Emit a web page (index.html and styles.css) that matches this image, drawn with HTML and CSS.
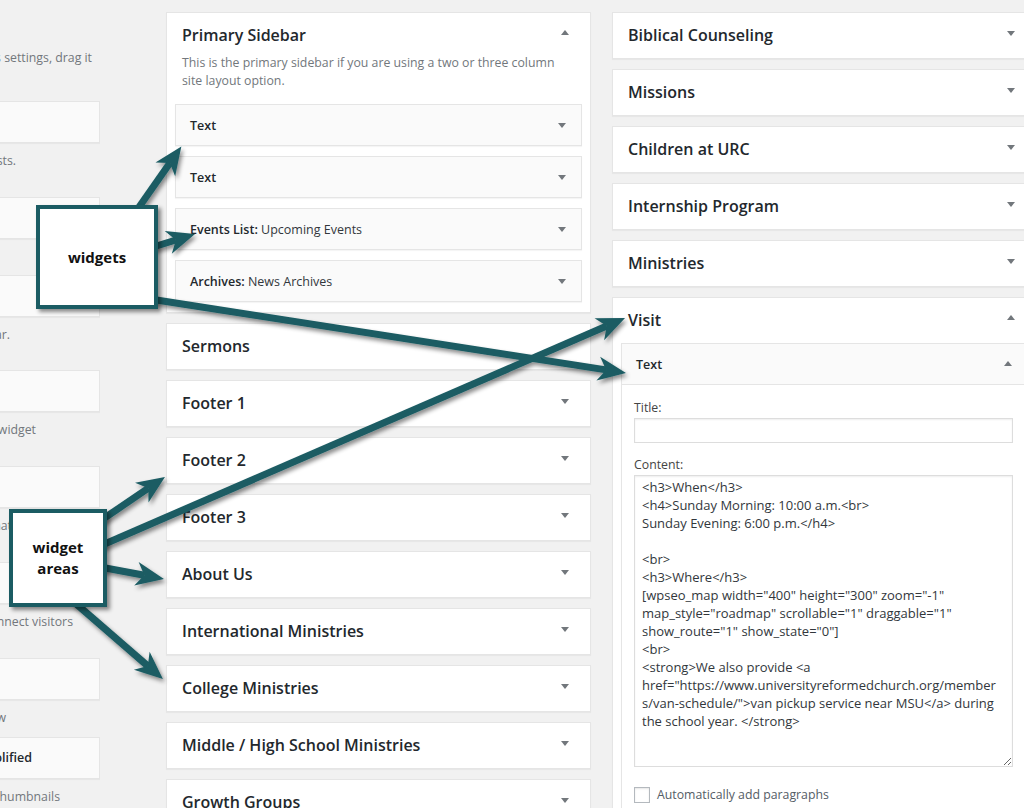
FILE: index.html
```html
<!DOCTYPE html>
<html lang="en">
<head>
    <meta charset="UTF-8">
    <meta name="viewport" content="width=device-width, initial-scale=1.0">
    <title>Widgets</title>
    <link rel="stylesheet" href="styles.css">
</head>
<body>
<div class="screen">

    <!-- available widgets (cut off on the left) -->
    <div class="available">
        <p class="cut end-92"><span>To activate a widget drag it to a sidebar or click on it. To deactivate a widget and delete its settings, drag it</span></p>

        <div class="avail-widget gap-first">
            <div class="avail-top"></div>
            <p class="avail-desc cut end-16"><span>Your site&rsquo;s most recent Posts.</span></p>
        </div>
        <div class="avail-widget">
            <div class="avail-top"></div>
        </div>
        <div class="avail-widget gap-lg">
            <div class="avail-top"></div>
            <p class="avail-desc cut end-10"><span>Add a custom menu to your sidebar.</span></p>
        </div>
        <div class="avail-widget gap-md">
            <div class="avail-top"></div>
            <p class="avail-desc cut end-36"><span>Arbitrary text or HTML in a widget</span></p>
        </div>
        <div class="avail-widget">
            <div class="avail-top"></div>
            <p class="avail-desc cut end-12"><span>Displays your events in a list or compact format</span></p>
        </div>
        <div class="avail-widget">
            <div class="avail-top"></div>
            <p class="avail-desc cut end-73"><span>Social icons that help you connect visitors</span></p>
        </div>
        <div class="avail-widget">
            <div class="avail-top"></div>
            <p class="avail-desc cut end-6"><span>Shows recent posts as a slideshow</span></p>
        </div>
        <div class="avail-widget gap-sm">
            <div class="avail-top"><h3 class="cut end-title"><span>Recent Posts Simplified</span></h3></div>
            <p class="avail-desc cut end-60"><span>Recent posts with excerpts and thumbnails</span></p>
        </div>
    </div>

    <!-- sidebars, first column -->
    <div class="sidebars col-mid">
        <div class="sidebar open">
            <div class="sidebar-name">
                <h2>Primary Sidebar</h2>
                <span class="toggle up"></span>
            </div>
            <p class="sidebar-description">This is the primary sidebar if you are using a two or three column site layout option.</p>
            <div class="widget">
                <div class="widget-top"><h3>Text</h3><span class="toggle"></span></div>
            </div>
            <div class="widget">
                <div class="widget-top"><h3>Text</h3><span class="toggle"></span></div>
            </div>
            <div class="widget">
                <div class="widget-top"><h3>Events List:<span class="in-title"> Upcoming Events</span></h3><span class="toggle"></span></div>
            </div>
            <div class="widget">
                <div class="widget-top"><h3>Archives:<span class="in-title"> News Archives</span></h3><span class="toggle"></span></div>
            </div>
        </div>
        <div class="sidebar"><div class="sidebar-name"><h2>Sermons</h2></div></div>
        <div class="sidebar"><div class="sidebar-name"><h2>Footer 1</h2><span class="toggle"></span></div></div>
        <div class="sidebar"><div class="sidebar-name"><h2>Footer 2</h2><span class="toggle"></span></div></div>
        <div class="sidebar"><div class="sidebar-name"><h2>Footer 3</h2><span class="toggle"></span></div></div>
        <div class="sidebar"><div class="sidebar-name"><h2>About Us</h2><span class="toggle"></span></div></div>
        <div class="sidebar"><div class="sidebar-name"><h2>International Ministries</h2><span class="toggle"></span></div></div>
        <div class="sidebar"><div class="sidebar-name"><h2>College Ministries</h2><span class="toggle"></span></div></div>
        <div class="sidebar"><div class="sidebar-name"><h2>Middle / High School Ministries</h2><span class="toggle"></span></div></div>
        <div class="sidebar"><div class="sidebar-name"><h2>Growth Groups</h2><span class="toggle"></span></div></div>
    </div>

    <!-- sidebars, second column -->
    <div class="sidebars col-right">
        <div class="sidebar"><div class="sidebar-name"><h2>Biblical Counseling</h2><span class="toggle"></span></div></div>
        <div class="sidebar"><div class="sidebar-name"><h2>Missions</h2><span class="toggle"></span></div></div>
        <div class="sidebar"><div class="sidebar-name"><h2>Children at URC</h2><span class="toggle"></span></div></div>
        <div class="sidebar"><div class="sidebar-name"><h2>Internship Program</h2><span class="toggle"></span></div></div>
        <div class="sidebar"><div class="sidebar-name"><h2>Ministries</h2><span class="toggle"></span></div></div>
        <div class="sidebar">
            <div class="sidebar-name"><h2>Visit</h2><span class="toggle up"></span></div>
            <div class="widget open">
                <div class="widget-top"><h3>Text</h3><span class="toggle up"></span></div>
                <div class="widget-inside">
                    <p>
                        <label for="title">Title:</label>
                        <input class="widefat" id="title" type="text" value="">
                    </p>
                    <p>
                        <label for="content">Content:</label>
                        <textarea class="widefat" id="content"><h3>When</h3>
<h4>Sunday Morning: 10:00 a.m.<br>
Sunday Evening: 6:00 p.m.</h4>

<br>
<h3>Where</h3>
[wpseo_map width="400" height="300" zoom="-1" map_style="roadmap" scrollable="1" draggable="1" show_route="1" show_state="0"]
<br>
<strong>We also provide <a href="https://www.universityreformedchurch.org/members/van-schedule/">van pickup service near MSU</a> during the school year. </strong></textarea>
                    </p>
                    <div class="check-row">
                        <input type="checkbox" id="filter">
                        <label for="filter">Automatically add paragraphs</label>
                    </div>
                </div>
            </div>
        </div>
    </div>

    <!-- annotations -->
    <svg class="callouts" width="1024" height="808" viewBox="0 0 1024 808">
        <defs>
            <marker id="head" markerUnits="userSpaceOnUse" viewBox="-10 -14 34 28" markerWidth="34" markerHeight="28" refX="0" refY="0" orient="auto">
                <path d="M20,0 L-8,-12 L0,0 L-8,12 Z" fill="#1b5c63"/>
            </marker>
            <filter id="shadow" x="-10%" y="-10%" width="130%" height="130%">
                <feDropShadow dx="2" dy="3" stdDeviation="2" flood-color="#000" flood-opacity="0.45"/>
            </filter>
        </defs>
        <g filter="url(#shadow)" stroke="#1b5c63" stroke-width="7" fill="none">
            <line x1="137" y1="210" x2="169.9" y2="162.9" marker-end="url(#head)"/>
            <line x1="150" y1="248" x2="175.9" y2="240" marker-end="url(#head)"/>
            <line x1="150" y1="299" x2="606.2" y2="369.9" marker-end="url(#head)"/>
            <line x1="100" y1="521" x2="148.4" y2="488.2" marker-end="url(#head)"/>
            <line x1="100" y1="546" x2="606.7" y2="326" marker-end="url(#head)"/>
            <line x1="100" y1="567" x2="144.3" y2="575.3" marker-end="url(#head)"/>
            <line x1="74" y1="602" x2="147.8" y2="666" marker-end="url(#head)"/>
        </g>
    </svg>
    <div class="callout callout-widgets">widgets</div>
    <div class="callout callout-areas">widget<br>areas</div>
</div>
</body>
</html>
```

FILE: styles.css
```css
* {
    box-sizing: border-box;
}
body {
    margin: 0;
    background: #f1f1f1;
    font-family: "Open Sans", "Liberation Sans", sans-serif;
    font-size: 12.3px;
    color: #444;
    overflow: hidden;
}
.screen {
    position: relative;
    display: flex;
    width: 1024px;
    height: 808px;
    overflow: hidden;
}

/* left column: available widgets */
.available {
    flex: none;
    width: 100px;
    overflow: hidden;
    padding-top: 49px;
}
.available p {
    margin: 0;
    line-height: 18px;
    color: #72777c;
}
.cut {
    display: flex;
    justify-content: flex-end;
    white-space: nowrap;
}
.end-92 { width: 92px; }
.end-60 { width: 60px; }
.end-73 { width: 73px; }
.end-36 { width: 36px; }
.end-16 { width: 16px; }
.end-12 { width: 12px; }
.end-10 { width: 10px; }
.end-6 { width: 6px; }
.avail-widget {
    margin-top: 27px;
}
.avail-widget.gap-first { margin-top: 34px; }
.avail-widget.gap-lg { margin-top: 36px; }
.avail-widget.gap-md { margin-top: 26px; }
.avail-widget.gap-sm { margin-top: 10px; }
.avail-top {
    height: 42px;
    margin-left: -20px;
    background: #fafafa;
    border: 1px solid #e5e5e5;
    box-shadow: 0 1px 1px rgba(0, 0, 0, .04);
}
.avail-top h3 {
    margin: 0;
    font-size: 12.5px;
    font-weight: 600;
    line-height: 40px;
    color: #23282d;
}
.avail-top .end-title { width: 51px; }
.avail-desc {
    margin-top: 9px !important;
}

/* sidebar columns */
.sidebars {
    flex: none;
    width: 425px;
    padding-top: 12px;
}
.col-mid { margin-left: 66px; }
.col-right { margin-left: 21px; }
.sidebar {
    background: #fff;
    border: 1px solid #e5e5e5;
    box-shadow: 0 1px 1px rgba(0, 0, 0, .04);
    margin-bottom: 10px;
}
.sidebar.open {
    padding-bottom: 10px;
}
.sidebar-name {
    position: relative;
    height: 45px;
    padding: 0 15px;
}
.sidebar-name h2 {
    margin: 0;
    font-size: 16px;
    font-weight: 600;
    line-height: 45px;
    color: #23282d;
}
.toggle {
    position: absolute;
    right: 21px;
    top: 18px;
    width: 0;
    height: 0;
    border-left: 4px solid transparent;
    border-right: 4px solid transparent;
    border-top: 5px solid #72777c;
}
.toggle.up {
    top: 17px;
    border-top: 0;
    border-bottom: 5px solid #72777c;
}
.sidebar-description {
    margin: -4px 0 0;
    padding: 0 15px;
    line-height: 18px;
    color: #72777c;
}

/* widgets inside a sidebar */
.widget {
    margin: 14px 8px 0;
    background: #fafafa;
    border: 1px solid #e5e5e5;
    box-shadow: 0 1px 1px rgba(0, 0, 0, .04);
}
.widget + .widget {
    margin-top: 10px;
}
.widget-top {
    position: relative;
    height: 40px;
    padding: 0 14px;
}
.widget-top h3 {
    margin: 0;
    font-size: 12.5px;
    font-weight: 600;
    line-height: 41px;
    color: #23282d;
}
.widget-top .in-title {
    font-weight: 400;
    color: #32373c;
}
.widget-top .toggle {
    right: 15px;
    top: 18px;
}
.widget-top .toggle.up {
    top: 17px;
}
.widget.open {
    margin-top: 0;
    background: #fff;
}
.widget.open .widget-top {
    background: #fafafa;
    height: 41px;
    border-bottom: 1px solid #e5e5e5;
}
.widget-inside {
    padding: 1px 14px 15px 12px;
}
.widget-inside p {
    margin: 13px 0;
}
.widget-inside label {
    display: block;
    line-height: 18px;
    margin-bottom: 1px;
    color: #444;
}
.widefat {
    display: block;
    width: 100%;
    margin: 0;
    border: 1px solid #ddd;
    box-shadow: inset 0 1px 2px rgba(0, 0, 0, .07);
    background: #fff;
    font-family: "Open Sans", "Liberation Sans", sans-serif;
    font-size: 13px;
    color: #32373c;
}
input.widefat {
    height: 25px;
}
textarea.widefat {
    height: 292px;
    padding: 2px 11px 2px 7px;
    line-height: 18px;
    resize: vertical;
}
.check-row {
    display: flex;
    align-items: center;
    gap: 7px;
    height: 30px;
}
.check-row input {
    margin: 0;
    width: 16px;
    height: 16px;
    appearance: none;
    border: 1px solid #b4b9be;
    background: #fff;
    box-shadow: inset 0 1px 2px rgba(0, 0, 0, .1);
}
.check-row label {
    display: inline;
    margin: 0;
    color: #555d66;
}

/* annotations drawn over the screenshot */
.callouts {
    position: absolute;
    left: 0;
    top: 0;
    z-index: 1;
    pointer-events: none;
}
.callout {
    position: absolute;
    z-index: 2;
    display: flex;
    align-items: center;
    justify-content: center;
    text-align: center;
    background: #fff;
    border: 4px solid #1b5c63;
    box-shadow: 3px 3px 4px rgba(0, 0, 0, .45);
    font-size: 15px;
    font-weight: 700;
    line-height: 21px;
    color: #111;
}
.callout-widgets {
    left: 36px;
    top: 205px;
    width: 122px;
    height: 104px;
}
.callout-areas {
    left: 9px;
    top: 509px;
    width: 98px;
    height: 98px;
}
```
